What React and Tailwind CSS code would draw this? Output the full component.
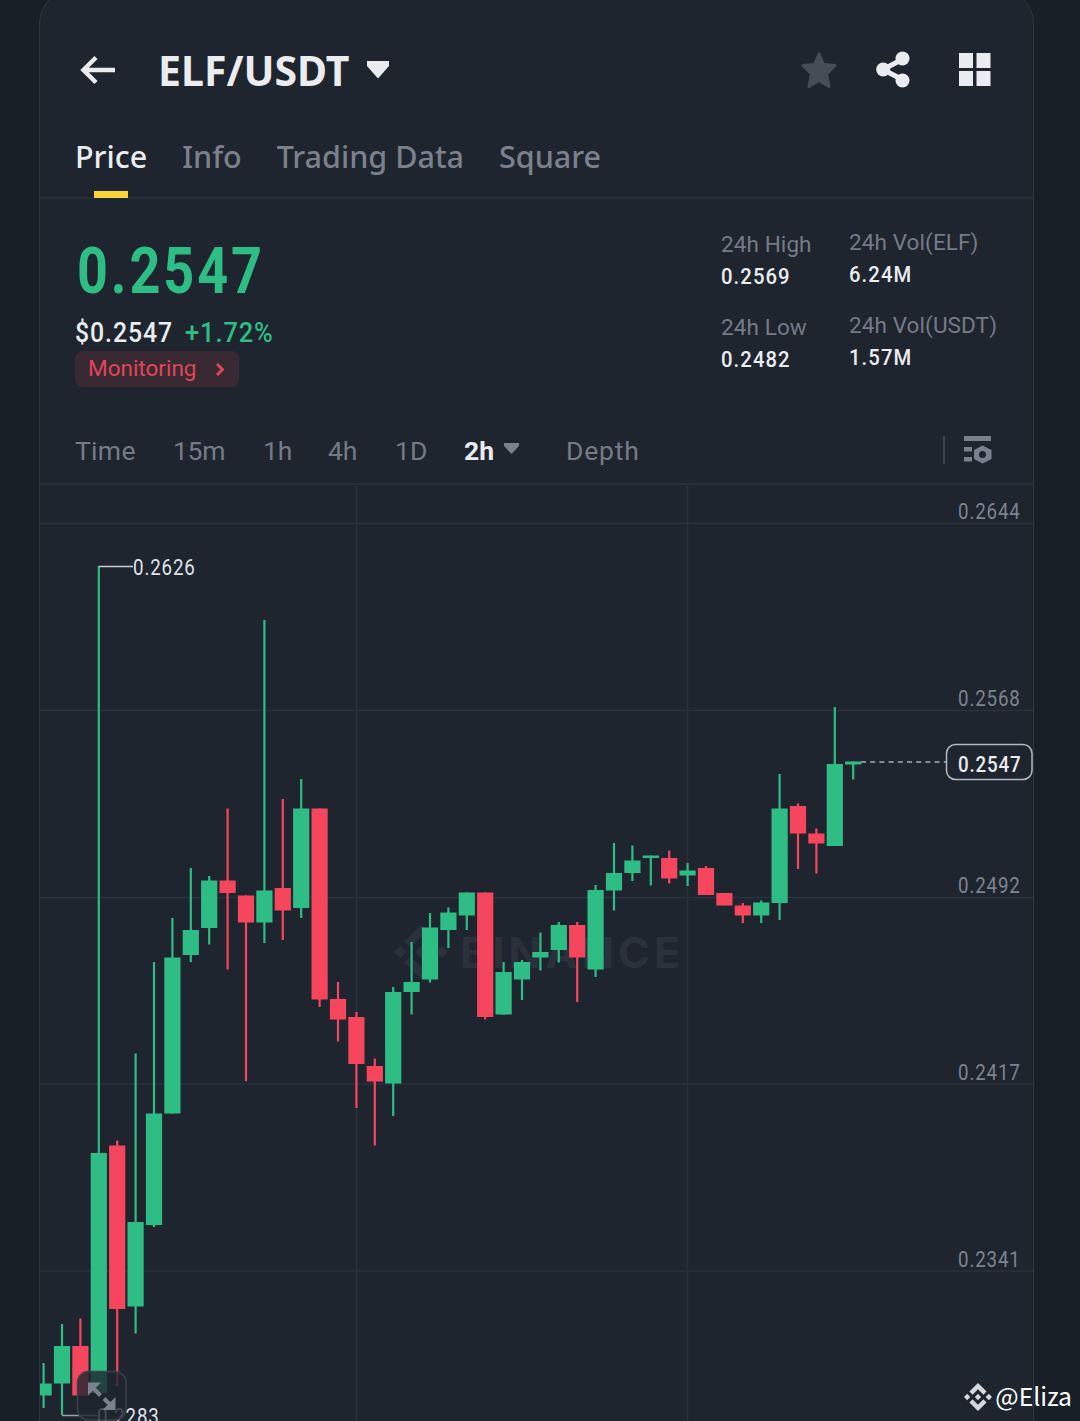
import React, { useState } from "react";
import { SiBinance } from "react-icons/si";

const tabs = ["Price", "Info", "Trading Data", "Square"];

const stats = [
  { label: "24h High", value: "0.2569" },
  { label: "24h Vol(ELF)", value: "6.24M" },
  { label: "24h Low", value: "0.2482" },
  { label: "24h Vol(USDT)", value: "1.57M" },
];

const UP = "#2ebd85";
const DOWN = "#f6465d";

// [up, high, body top, body bottom, low] in page pixels
const candles = [
  [1, 1363, 1383.5, 1395.5, 1408],
  [1, 1324, 1346, 1383.5, 1415],
  [0, 1318.5, 1346, 1395.5, 1395.5],
  [1, 566, 1153, 1393, 1393],
  [0, 1140.5, 1145.5, 1309, 1386],
  [1, 1053.5, 1222, 1306.5, 1333.5],
  [1, 962, 1113.5, 1225, 1227],
  [1, 918, 957.5, 1113.5, 1113.5],
  [1, 868, 930, 955, 962],
  [1, 876, 880.5, 928, 944.5],
  [0, 808.5, 880.5, 893, 969.5],
  [0, 895.5, 895.5, 922.5, 1081],
  [1, 620, 890.5, 922.5, 943],
  [0, 799, 888, 910.5, 940],
  [1, 779, 808.5, 908, 918],
  [0, 808.5, 808.5, 999.5, 1007],
  [0, 982, 999, 1019.5, 1041.5],
  [0, 1012, 1017, 1064, 1108],
  [0, 1058.5, 1066, 1081.5, 1145.5],
  [1, 987, 992, 1083.5, 1116],
  [1, 942, 982, 992, 1014.5],
  [1, 913, 927.5, 979.5, 982.5],
  [1, 907.5, 912.5, 930, 948],
  [1, 892.5, 892.5, 915.5, 930],
  [0, 892.5, 892.5, 1017, 1019.5],
  [1, 962, 972, 1014.5, 1014.5],
  [1, 960, 962, 979.5, 1000],
  [1, 932.5, 952, 957.5, 970.5],
  [1, 922, 925, 950, 962.5],
  [0, 922, 925, 957.5, 1002],
  [1, 885, 890, 969.5, 977],
  [1, 843, 873, 890.5, 910.5],
  [1, 845.5, 860.5, 873, 881],
  [1, 855.5, 855.5, 858, 885.5],
  [0, 850.5, 858, 878.5, 883.5],
  [1, 863, 870.5, 875.5, 886],
  [0, 866, 868, 895, 895],
  [0, 893, 893, 905.5, 905.5],
  [0, 903, 905.5, 915.5, 923],
  [1, 900.5, 902.5, 915.5, 923],
  [1, 774, 808.5, 903, 920],
  [0, 803.5, 806, 833.5, 869],
  [0, 828.5, 833.5, 843.5, 873.5],
  [1, 707, 764, 846, 846],
  [1, 761.5, 761.5, 764.5, 779.5],
];

const levels = [
  { y: 523.5, label: "0.2644" },
  { y: 710.5, label: "0.2568" },
  { y: 897.5, label: "0.2492" },
  { y: 1084, label: "0.2417" },
  { y: 1271, label: "0.2341" },
];

// narrow digits with open spacing
function PriceText({ x, y, children, ...rest }) {
  return (
    <text transform={`translate(${x} ${y}) scale(0.87 1)`} fontSize="21.5" letterSpacing="1" {...rest}>
      {children}
    </text>
  );
}

function Chart() {
  return (
    <svg viewBox="40 484 993 937" className="block h-[937px] w-[993px] font-['Roboto',sans-serif]">
      <g stroke="#2b313b" strokeWidth="1.5">
        {levels.map(l => (
          <line key={l.label} x1="40" x2="1033" y1={l.y} y2={l.y} />
        ))}
        <line x1="356.5" x2="356.5" y1="486" y2="1421" />
        <line x1="687.5" x2="687.5" y1="486" y2="1421" />
      </g>

      {/* watermark */}
      <g fill="#2b313b" color="#2b313b">
        <SiBinance x="394" y="925" size={54} />
        <text x="460" y="968" fontSize="43" fontWeight="700" fontFamily="Inter" textLength="220">BINANCE</text>
      </g>

      {candles.map(([up, high, top, bottom, low], i) => {
        const x = 43.6 + i * 18.4;
        return (
          <g key={i} fill={up ? UP : DOWN}>
            <rect x={x - 1.1} y={high} width="2.2" height={low - high} />
            <rect x={x - 8.1} y={top} width="16.2" height={bottom - top} />
          </g>
        );
      })}

      {/* high and low markers */}
      <path d="M98.8 566.5H133" stroke="#c9ced6" strokeWidth="1.5" />
      <PriceText x={133} y={574.5} fill="#dfe3e9">0.2626</PriceText>
      <path d="M62 1415.5H98" stroke="#9aa0aa" strokeWidth="1.5" />
      <PriceText x={97} y={1424} fill="#dfe3e9">0.2283</PriceText>

      {/* last price */}
      <line x1="861" x2="946" y1="762" y2="762" stroke="#a9afb9" strokeWidth="1.5" strokeDasharray="5 4.2" />
      <rect x="946.5" y="744.5" width="85.5" height="35" rx="9" fill="#1e252f" stroke="#b3b9c3" strokeWidth="1.5" />
      <PriceText x={958} y={772} fontWeight="500" fill="#eaecef">0.2547</PriceText>

      {levels.map(l => (
        <PriceText key={l.label} x={958} y={l.y - 4.5} fill="#7d838f">{l.label}</PriceText>
      ))}

      {/* expand button */}
      <rect x="77.5" y="1371.5" width="48.5" height="48.5" rx="11" fill="#1e252f" fillOpacity="0.8" stroke="#3b424d" strokeWidth="1.5" />
      <g fill="#7b828d" stroke="#7b828d">
        <path d="M88 1382.5h13l-13 13z" stroke="none" />
        <path d="M93 1388l7.5 7.5M104 1398.5l8 8" strokeWidth="4" />
        <path d="M115.5 1397v13h-13z" stroke="none" />
      </g>
    </svg>
  );
}

export default function App() {
  const [tab, setTab] = useState("Price");

  return (
    <div className="relative h-[1421px] w-[1080px] overflow-hidden bg-[#181f26] pl-[39px] font-['Noto_Sans',sans-serif] text-[#eaecef]">
      <div className="-mt-3 h-[1440px] w-[995px] overflow-hidden rounded-t-[36px] border border-[#303640] bg-[#1e252f] pt-[11px]">
        {/* header */}
        <header className="flex h-[118px] items-center pt-[21px] pl-10">
          <svg viewBox="0 0 36 30" className="h-[30px] w-9" fill="none" stroke="#eaecef" strokeWidth="4.5">
            <path d="M35 15H4M16 2.5L3.5 15 16 27.5" />
          </svg>
          <h1 className="ml-[42px] w-[192px] pt-px text-[41px] leading-none font-bold whitespace-nowrap">ELF/USDT</h1>
          <svg viewBox="0 0 22 18" className="ml-[17px] h-[18px] w-[22px]" fill="#eaecef">
            <path d="M0 0h22v5L11 17.5 0 5z" />
          </svg>
          <div className="mr-[42px] ml-auto flex items-center">
            <svg viewBox="0 0 36 38" className="h-[38px] w-9" fill="#474d57" stroke="#474d57" strokeWidth="3" strokeLinejoin="round">
              <path d="M18 3l4.5 10.5 11.5 1-8.5 8.500 2.5 12.500-10-6-10 6 2.500-12.500L2 14.500l11.500-1z" />
            </svg>
            <svg viewBox="0 0 34 37" className="ml-[39px] h-[37px] w-[34px]" fill="#eaecef">
              <path d="M27 8L7 18.5 27 29" fill="none" stroke="#eaecef" strokeWidth="5" />
              <circle cx="7.2" cy="18.5" r="7" />
              <circle cx="26.5" cy="7.5" r="7" />
              <circle cx="26.5" cy="29.5" r="7" />
            </svg>
            <svg viewBox="0 0 32 33" className="ml-[49px] h-[33px] w-8" fill="#eaecef">
              <path d="M0 0h14v15H0zM17.5 0h14v15h-14zM0 18h14v15H0zM17.5 18h14v15h-14z" />
            </svg>
          </div>
        </header>

        {/* tabs */}
        <nav className="flex h-[81px] gap-[35px] border-b-2 border-[#282e38] pl-[35px]">
          {tabs.map(t => (
            <button
              key={t}
              onClick={() => setTab(t)}
              className={`flex h-[81px] flex-col items-center justify-between pt-[17px] text-[30.5px] leading-[42px] font-medium ${tab === t ? "text-[#eaecef]" : "text-[#7b818c]"}`}
            >
              {t}
              {tab === t && <span className="mb-px h-[7px] w-[34px] bg-[#f8d33a]" />}
            </button>
          ))}
        </nav>

        {/* price summary */}
        <section className="flex h-[218px] justify-between pl-[35px] font-['Roboto',sans-serif]">
          <div className="pt-[38px]">
            <div className="ml-0.5 h-[68px] w-[190px] origin-left scale-x-[0.83] text-[65px] leading-[68px] font-bold tracking-[3.5px] text-[#2ebd85]">0.2547</div>
            <div className="mt-[10px] flex h-9 gap-[7px] text-[27px] leading-9 font-medium">
              <span className="w-[103px] origin-left scale-x-[0.92] tracking-[1px]">$0.2547</span>
              <span className="origin-left scale-x-[0.94] tracking-[1px] text-[#2ebd85]">+1.72%</span>
            </div>
            <button className="flex h-9 w-[164px] items-center gap-[19px] rounded-lg bg-[#382932] pl-[13px] text-[22.5px] text-[#e0465b]">
              Monitoring
              <svg viewBox="0 0 8 13" className="h-[13px] w-2" fill="none" stroke="currentColor" strokeWidth="3">
                <path d="M1 1l5.5 5.5L1 12" />
              </svg>
            </button>
          </div>
          <div className="grid h-[166px] grid-cols-[128px_184px] pt-[27px]">
            {stats.map((s, i) => (
              <div key={s.label} className={`h-[83px] ${i % 2 ? "" : "pt-0.5"}`}>
                <div className="text-[22.5px] leading-8 tracking-[0.1px] text-[#757b86]">{s.label}</div>
                <div className="origin-left scale-x-[0.9] text-[22.5px] leading-8 font-medium tracking-[1.2px]">{s.value}</div>
              </div>
            ))}
          </div>
        </section>

        {/* intervals */}
        <div className="flex h-[68px] items-center border-b-2 border-[#282e38] pl-[35px] font-['Roboto',sans-serif] text-[26.5px] text-[#757b86]">
          <div className="flex pt-px tracking-[0.3px]">
            <span className="w-[98px]">Time</span>
            <span className="w-[90px] tracking-[-0.3px]">15m</span>
            <span className="w-[65px] tracking-[-0.2px]">1h</span>
            <span className="w-[67px] tracking-[-0.2px]">4h</span>
            <span className="w-[69px] tracking-normal">1D</span>
            <span className="flex w-[102px] items-center gap-[10px] font-bold tracking-normal text-[#eaecef]">
              2h
              <svg viewBox="0 0 15 11" className="mb-1 h-[11px] w-[15px]" fill="#7b818c">
                <path d="M0 0h15v3L7.5 11 0 3z" />
              </svg>
            </span>
            <span className="tracking-[0.8px]">Depth</span>
          </div>
          <span className="mr-[19px] ml-auto h-7 w-0.5 bg-[#3a414c]" />
          <svg viewBox="0 0 28 28" className="mr-[41px] h-7 w-7" fill="#7b818c">
            <path d="M0 0h27v5H0zM0 11h8v4.5H0zM0 21h8v4.5H0z" />
            <path fillRule="evenodd" d="M18.500 9.500l9 4.500v9l-9 4.500-8.500-4.500v-9zM18.500 15a3.500 3.500 0 100 7 3.500 3.500 0 000-7z" />
          </svg>
        </div>

        <div className="-mt-px">
          <Chart />
        </div>
      </div>

      <div className="absolute right-2 bottom-1 flex items-center gap-[3px] text-white">
        <SiBinance className="h-7 w-7 text-[#d5d7dc]" />
        <span className="pb-[3px] font-['Noto_Sans_CJK_SC',sans-serif] text-[24.7px] leading-[37px]">@Eliza</span>
      </div>
    </div>
  );
}
